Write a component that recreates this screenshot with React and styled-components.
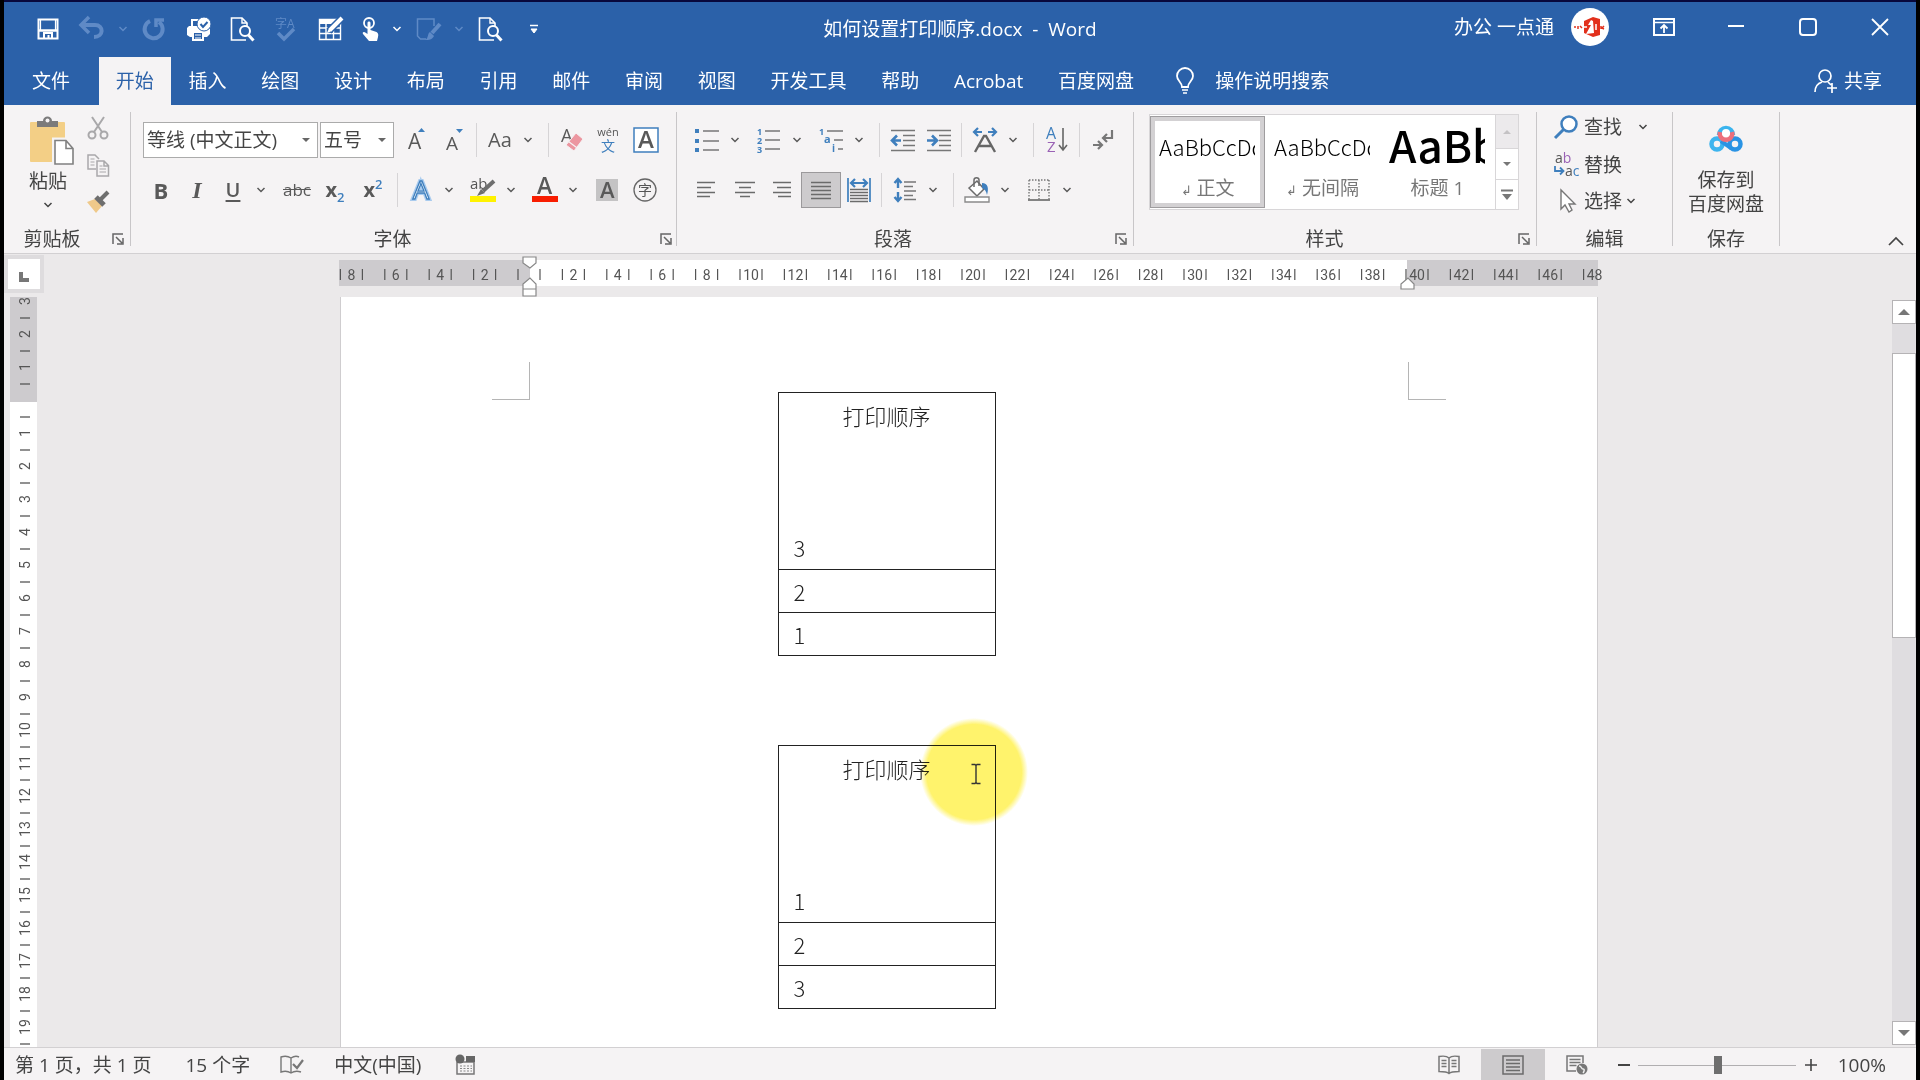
import React from "react"
import styled, { createGlobalStyle } from "styled-components"

const GlobalStyle = createGlobalStyle`
  :root {
    --blue: #2b61a9;
    --ribbon: #f5f3f4;
    --desk: #ebe9ea;
    --line: #d2d0d2;
    --ink: #444;
    --accent: #3f7fbd;
  }
  * {
    box-sizing: border-box;
  }
  body {
    margin: 0;
    background: #000;
    color: var(--ink);
    font-family: "Open Sans", "Noto Sans CJK SC", sans-serif;
    font-size: 19px;
    line-height: 24px;
  }
  button,
  select {
    font: inherit;
    color: inherit;
    background: none;
    border: none;
    padding: 0;
    margin: 0;
  }
  svg {
    overflow: visible;
  }
`

/* ---------- icons ---------- */

const Svg = ({ w = 24, h = 24, children, ...rest }) => (
  <svg
    width={w}
    height={h}
    viewBox={`0 0 ${w} ${h}`}
    fill="none"
    stroke="currentColor"
    strokeWidth="2"
    aria-hidden="true"
    {...rest}
  >
    {children}
  </svg>
)

const Caret = () => (
  <Svg w={10} h={8}>
    <path d="M1.500 2l3.500 3.500L8.500 2" strokeWidth="1.500" />
  </Svg>
)

const SaveIcon = () => (
  <Svg w={22} h={22}>
    <path d="M1.500 1.500h19v19h-19z" />
    <path d="M1.500 12.500h19" strokeWidth="2.500" />
    <path d="M7 20v-5h8v5" />
    <path d="M11.500 17v3" />
    <path d="M3.500 1v11M18.500 1v11" strokeWidth="1.200" />
  </Svg>
)

const UndoIcon = () => (
  <Svg>
    <path d="M3 8h12c9 0 9 12-1 12" strokeWidth="4" />
    <path d="M9 0L1 8l8 8" strokeWidth="3.500" />
  </Svg>
)

const RedoIcon = () => (
  <Svg w={22}>
    <path d="M7 4a9 9 0 1 0 9 1" strokeWidth="4" />
    <path d="M13 10V3h8" strokeWidth="3.500" />
  </Svg>
)

const PrintIcon = () => (
  <Svg w={25}>
    <path d="M6 10V3h8" />
    <path d="M3 9h19l2 3v5l-3 3H4l-3-2v-7z" fill="currentColor" stroke="none" />
    <path d="M7 15h10v8H7z" fill="var(--blue)" />
    <path d="M9 18h6M9 21h6" strokeWidth="1" />
    <circle cx="18" cy="7" r="7" fill="currentColor" stroke="var(--blue)" strokeWidth="1" />
    <path d="M14.500 7l2.500 3 4.500-5" stroke="var(--blue)" />
  </Svg>
)

const PreviewIcon = () => (
  <Svg w={25}>
    <path d="M17 10V6l-5-5H1.500v22H16" strokeWidth="1.600" />
    <path d="M12 1v5h5" strokeWidth="1.400" />
    <circle cx="15" cy="14" r="5" fill="var(--blue)" />
    <path d="M18.500 18l5 5.500" strokeWidth="3" />
  </Svg>
)

const SpellIcon = () => (
  <Svg>
    <text x="1" y="11" fontSize="12" fill="currentColor" stroke="none">字A</text>
    <path d="M4 16l6 6 10-10" strokeWidth="3.500" />
  </Svg>
)

const TablePenIcon = () => (
  <Svg w={25}>
    <path d="M1.500 2.500h21v20h-21zM1.500 11h21M1.500 16.500h21M8 7v16M15.500 7v16" strokeWidth="1.400" />
    <path d="M1 2h17v5H1z" fill="currentColor" stroke="none" />
    <path d="M23 2L11 14" stroke="var(--blue)" strokeWidth="7" />
    <path d="M24 1L12 13" strokeWidth="4" />
    <path d="M11 11l3 3-5 2z" fill="currentColor" stroke="none" />
  </Svg>
)

const TouchIcon = () => (
  <Svg w={18}>
    <circle cx="8" cy="6" r="5" strokeWidth="1.800" />
    <path d="M6.500 6c0-2 3-2 3 0v7l6 2c2 1 2 3 1.500 5l-1 4H8l-6-7c-1-2 1-3 3-1l1.500 1z" fill="currentColor" stroke="none" />
  </Svg>
)

const DocPenIcon = () => (
  <Svg w={25}>
    <path d="M18 9V2H1.500v17l3 3H10" strokeWidth="1.500" />
    <path d="M24 7l-8 9" strokeWidth="4" />
    <path d="M14 15l4 4c-2 4-5 4-9 4 4-2 2-6 5-8z" fill="currentColor" stroke="none" />
  </Svg>
)

const CustomizeIcon = () => (
  <Svg w={8} h={12}>
    <path d="M0 2.500h8" strokeWidth="1.500" />
    <path d="M1 6h6l-3 4z" fill="currentColor" strokeWidth="1" />
  </Svg>
)

const AvatarArt = () => (
  <Svg w={38} h={38}>
    <path d="M13 13l9-4 7 2v16l-7 2-9-4z" fill="#e2301c" stroke="none" />
    <path d="M20 12l-3 5h3l-5 9 8-1-1-12z" fill="#fff" stroke="none" />
    <path d="M4 18v2M7 18v3M9 18l2 2M30 18v3M33 18l-2 2 2 1" stroke="#e2301c" strokeWidth="1.500" />
    <path d="M12 19h4M25 16v6" stroke="#fff" strokeWidth="1.500" />
  </Svg>
)

const RibbonDisplayIcon = () => (
  <Svg w={22} h={18}>
    <path d="M1 1h20v16H1z" />
    <path d="M1 4.500h20" strokeWidth="1.500" />
    <path d="M11 15V7M7.500 10.500L11 7l3.500 3.500" strokeWidth="1.800" />
  </Svg>
)

const MinIcon = () => (
  <Svg w={18} h={18}><path d="M1 8h16" /></Svg>
)
const MaxIcon = () => (
  <Svg w={18} h={18}><rect x="1" y="1" width="16" height="16" rx="3" /></Svg>
)
const CloseIcon = () => (
  <Svg w={18} h={18}><path d="M1 1l16 16M17 1L1 17" strokeWidth="1.800" /></Svg>
)

const BulbIcon = () => (
  <Svg w={20} h={26}>
    <path d="M7 19c0-5-5-6-5-11a8 8 0 0 1 16 0c0 5-5 6-5 11z" strokeWidth="1.800" />
    <path d="M7 22h6M8 25h4" strokeWidth="1.600" />
  </Svg>
)

const ShareIcon = () => (
  <Svg>
    <circle cx="11" cy="7" r="6" strokeWidth="1.700" />
    <path d="M1 23c0-6 4-9 7-10M14 13l3 3M18 14v10M13 19h10" strokeWidth="1.700" />
  </Svg>
)

const PasteIcon = () => (
  <Svg w={52} h={50}>
    <g transform="translate(8 0)">
      <rect x="0" y="6" width="35" height="40" rx="1" fill="#f3cf86" stroke="none" />
      <path d="M7 5h6c0-6 9-6 9 0h6v6H7z" fill="#7b7b7b" stroke="none" />
      <circle cx="17.500" cy="4.500" r="2" fill="#f5f3f4" stroke="none" />
      <path d="M24 23.500h12l7 8V49H24z" fill="#fff" stroke="#f5f3f4" strokeWidth="4" />
      <path d="M25 24.500h11l7 8V48H25zM36 24.500v8h7" fill="#fff" stroke="#808080" strokeWidth="1.600" />
    </g>
  </Svg>
)

const ScissorsIcon = () => (
  <Svg w={22} stroke="#a9a8aa">
    <circle cx="5" cy="19" r="3.500" />
    <circle cx="17" cy="19" r="3.500" />
    <path d="M5 1l10 15M17 1L7 16" />
  </Svg>
)

const CopyIcon = () => (
  <Svg stroke="#a9a8aa">
    <path d="M10 16H2V2h7l4 4" strokeWidth="1.500" />
    <path d="M4.500 6h4M4.500 9h4M4.500 12h4" strokeWidth="1.200" />
    <path d="M11 8h7l4.500 4.500V23H11zM18 8v5h4.500" strokeWidth="1.500" />
    <path d="M13.500 13h3M13.500 16h6.500M13.500 19h6.500" strokeWidth="1.200" />
  </Svg>
)

const BrushIcon = () => (
  <Svg>
    <path d="M1 12l8-3 7 7-6 7z" fill="#efc98a" stroke="none" />
    <path d="M10 7l8 8" stroke="#6e6e6e" strokeWidth="5" />
    <path d="M14 10l8-8" stroke="#6e6e6e" strokeWidth="4" />
  </Svg>
)

const LauncherIcon = () => (
  <Svg w={12} h={12} stroke="#666" strokeWidth="1.500">
    <path d="M1 11V1h10" />
    <path d="M4 4l6 6M11 5v6H5" />
  </Svg>
)

const GlyphA = ({ x, y, size, color = "#595959", weight = 400 }) => (
  <text x={x} y={y} fontSize={size} fontWeight={weight} fill={color} stroke="none">
    A
  </text>
)

const GrowIcon = () => (
  <Svg>
    <GlyphA x={4} y={21} size={21} />
    <path d="M14 4h7l-3.500-4z" fill="var(--accent)" stroke="none" />
  </Svg>
)
const ShrinkIcon = () => (
  <Svg>
    <GlyphA x={4} y={22} size={19} />
    <path d="M14 1h7l-3.500 4z" fill="var(--accent)" stroke="none" />
  </Svg>
)

const EraserIcon = () => (
  <Svg>
    <GlyphA x={1} y={14} size={18} />
    <path d="M16 5l7 6-9 12-8-6z" fill="#ec96a0" stroke="#f5f3f4" strokeWidth="1" />
    <path d="M8.500 13.500l8 6" stroke="#f5f3f4" strokeWidth="1.200" />
  </Svg>
)

const PinyinIcon = () => (
  <Svg w={22} h={26}>
    <text x="11" y="9" fontSize="11" textAnchor="middle" fill="#555" stroke="none">wén</text>
    <text x="11" y="24" fontSize="14" textAnchor="middle" fill="var(--accent)" stroke="none">文</text>
  </Svg>
)

const BoxedAIcon = () => (
  <Svg w={26} h={26}>
    <path d="M1 1h24v24H1z" stroke="var(--accent)" fill="#fff" strokeWidth="1.500" />
    <GlyphA x={5} y={21} size={24} weight={600} />
  </Svg>
)

const TextEffectIcon = () => (
  <Svg w={22}>
    <text x="11" y="21" fontSize="26" textAnchor="middle" fill="#fff" stroke="#a9cbee" strokeWidth="4">A</text>
    <text x="11" y="21" fontSize="26" textAnchor="middle" fill="#fff" stroke="#3f7fbd" strokeWidth="1.300">A</text>
  </Svg>
)

const HighlightIcon = () => (
  <Svg w={26} h={26}>
    <text x="0" y="12" fontSize="15" fill="#555" stroke="none">ab</text>
    <path d="M24 4L13 14" stroke="#6e6e6e" strokeWidth="4" />
    <path d="M11 12l4 4-8 3z" fill="#6e6e6e" stroke="none" />
    <path d="M0 19h26v6H0z" fill="#fff200" stroke="none" />
  </Svg>
)

const FontColorIcon = () => (
  <Svg w={26} h={26}>
    <GlyphA x={5} y={17} size={23} weight={600} />
    <path d="M0 19h26v6H0z" fill="#f81c00" stroke="none" />
  </Svg>
)

const ShadeIcon = () => (
  <Svg w={22} h={22}>
    <path d="M0 0h22v22H0z" fill="#c4c3c4" stroke="none" />
    <GlyphA x={4} y={19} size={22} weight={600} />
  </Svg>
)

const EncloseIcon = () => (
  <Svg>
    <circle cx="12" cy="12" r="11" strokeWidth="1.300" stroke="#666" />
    <text x="12" y="17" fontSize="14" textAnchor="middle" fill="#555" stroke="none">字</text>
  </Svg>
)

const BulletsIcon = () => (
  <Svg>
    <path d="M0 1h4v4H0zM0 11h4v4H0zM0 20h4v4H0z" fill="var(--accent)" stroke="none" />
    <path d="M8 3h16M8 13h16M8 22h16" stroke="#777" strokeWidth="1.500" />
  </Svg>
)

const NumbersIcon = () => (
  <Svg h={26}>
    {["1", "2", "3"].map((n, i) => (
      <text key={n} x="0" y={8 + i * 9} fontSize="9" fontWeight="700" fill="var(--accent)" stroke="none">{n}</text>
    ))}
    <path d="M8 4h15M8 13h15M8 22h15" stroke="#777" strokeWidth="1.500" />
  </Svg>
)

const MultilevelIcon = () => (
  <Svg h={26}>
    <text x="0" y="8" fontSize="9" fontWeight="700" fill="var(--accent)" stroke="none">1</text>
    <text x="5" y="16" fontSize="11" fontWeight="700" fill="var(--accent)" stroke="none">a</text>
    <text x="13" y="25" fontSize="10" fontWeight="700" fill="var(--accent)" stroke="none">i</text>
    <path d="M8 4h16M15 13h9M19 22h5" stroke="#777" strokeWidth="1.500" />
  </Svg>
)

const IndentIcon = ({ out }) => (
  <Svg>
    <path d="M0 2.500h24M12 7.500h12M12 12.500h12M12 17.500h12M0 22.500h24" stroke="#777" strokeWidth="1.500" />
    <path
      d={out ? "M10 12.500H2M6 7.500l-5 5 5 5" : "M0 12.500h8M5 7.500l5 5-5 5"}
      stroke="var(--accent)"
      strokeWidth="2.600"
    />
  </Svg>
)

const AsianLayoutIcon = () => (
  <Svg w={26}>
    <path d="M2 4h8M6 0L2 4l4 4M16 4h8M20 0l4 4-4 4" stroke="var(--accent)" strokeWidth="2.200" />
    <path d="M3 24L12 8h2l9 16M7 18h12" stroke="#666" strokeWidth="2.400" />
  </Svg>
)

const SortIcon = () => (
  <Svg w={22} h={26}>
    <text x="0" y="12" fontSize="16" fill="var(--accent)" stroke="none">A</text>
    <text x="1" y="25" fontSize="15" fill="#9a62b5" stroke="none">Z</text>
    <path d="M17 1v22M13 18l4 5 4-5" stroke="#666" strokeWidth="1.600" />
  </Svg>
)

const MarksIcon = () => (
  <Svg w={22}>
    <path d="M20 2v8h-9M15 6l-4 4 4 4" stroke="#777" strokeWidth="2.200" />
    <path d="M1 17h9M6 13l4 4-4 4" stroke="#777" strokeWidth="2.200" />
  </Svg>
)

const alignPaths = {
  left: "M0 1.500h18M0 6.500h14M0 11.500h18M0 15.500h13",
  center: "M0 1.500h20M4 6.500h12M0 11.500h20M5 15.500h10",
  right: "M0 1.500h18M4 6.500h14M0 11.500h18M5 15.500h13",
  justify: "M0 1.500h20M0 5.500h20M0 9.500h20M0 13.500h20M0 17.500h20",
}

const AlignIcon = ({ kind }) => (
  <Svg w={20} h={19}>
    <path d={alignPaths[kind]} stroke="#6b6b6b" strokeWidth="1.500" />
  </Svg>
)

const DistributeIcon = () => (
  <Svg>
    <path d="M1 0v24M23 0v24" stroke="var(--accent)" strokeWidth="1.700" />
    <path d="M4 5h16M8 1L4 5l4 4M16 1l4 4-4 4" stroke="var(--accent)" strokeWidth="2.200" />
    <path d="M3 11.500h18M3 14.500h18M3 17.500h18M3 20.500h18M3 23.500h18" stroke="#6b6b6b" strokeWidth="1.500" />
  </Svg>
)

const SpacingIcon = () => (
  <Svg w={22} h={26}>
    <path d="M4 3v8M0.500 6L4 2l3.500 4M4 15v8M0.500 20L4 24l3.500-4" stroke="var(--accent)" strokeWidth="2.400" />
    <path d="M10 5h12M10 9.500h9M10 14h12M10 18.500h9M10 22.500h12" stroke="#777" strokeWidth="1.500" />
  </Svg>
)

const FillIcon = () => (
  <Svg w={26} h={26}>
    <path d="M5 11l8-7 7 8-7 7z" fill="#fff" stroke="#6b6b6b" strokeWidth="1.500" />
    <path d="M10 10V3c0-3 5-3 5 0v6" stroke="#6b6b6b" strokeWidth="1.500" />
    <path d="M18 6c6 0 7 5 5 12-1-4-2-6-5-7z" fill="var(--accent)" stroke="none" />
    <path d="M1 20h24v5H1z" fill="#fff" stroke="#8a8a8a" strokeWidth="1.400" />
  </Svg>
)

const BordersIcon = () => (
  <Svg w={22} h={22}>
    <path d="M1 1h20M1 11h20M1 1v20M11 1v20M21 1v20" stroke="#777" strokeWidth="1.400" strokeDasharray="1.500 1.500" />
    <path d="M0 21h22" stroke="#777" strokeWidth="1.800" />
  </Svg>
)

const FindIcon = () => (
  <Svg>
    <circle cx="15" cy="9" r="7.500" fill="#fff" stroke="var(--accent)" strokeWidth="2.500" />
    <path d="M9.500 14.500L1 23" stroke="var(--accent)" strokeWidth="3" />
  </Svg>
)

const ReplaceIcon = () => (
  <Svg w={26} h={26}>
    <text x="1" y="11" fontSize="14" fill="#555" stroke="none">a<tspan fill="#9a62b5">b</tspan></text>
    <text x="11" y="24" fontSize="14" fill="#555" stroke="none">a<tspan fill="#3f7fbd">c</tspan></text>
    <path d="M1 14v5h8M6 15.500l3.500 3.500L6 22.500" stroke="var(--accent)" strokeWidth="1.800" />
  </Svg>
)

const SelectIcon = () => (
  <Svg w={26} h={24}>
    <path d="M7 1v19l4-4 4 7 3-2-3-6h6z" fill="#fff" stroke="#777" strokeWidth="1.400" />
  </Svg>
)

const CloudIcon = () => (
  <Svg w={34} h={28}>
    <circle cx="8" cy="20" r="5.500" stroke="#3db4ee" strokeWidth="4.500" />
    <circle cx="26" cy="20" r="5.500" stroke="#2a93e4" strokeWidth="4.500" />
    <path d="M12 17l10 7" stroke="#2a93e4" strokeWidth="4" />
    <path d="M10 11a7 7 0 1 1 14 0" stroke="#3bb4ee" strokeWidth="4.500" />
    <path d="M11 8a6.200 6.200 0 1 0 12 0" stroke="#ec6f7c" strokeWidth="4.500" />
    <circle cx="17" cy="9" r="4" fill="#fff" stroke="none" />
  </Svg>
)

const ProofIcon = () => (
  <Svg w={24} h={20} stroke="#777" strokeWidth="1.400">
    <path d="M11 3c-3-2-7-2-10-1v15c3-1 7-1 10 1 3-2 7-2 10-1M11 3v15M11 3c3-2 6-2 8-1" />
    <path d="M13 9l4 4 6-8" strokeWidth="2.200" />
  </Svg>
)

const MacroIcon = () => (
  <Svg w={20} h={20}>
    <path d="M2 7h17v12H2z" stroke="#777" strokeWidth="1.500" />
    <circle cx="5" cy="4" r="4.500" fill="#666" stroke="none" />
    <path d="M11 1h9v6h-9z" fill="#666" stroke="none" />
    <path d="M5 11h12M5 13.500h12M5 16h12" stroke="#888" strokeWidth="1.200" strokeDasharray="2 1.500" />
  </Svg>
)

const ReadIcon = () => (
  <Svg w={22} h={20} stroke="#777" strokeWidth="1.500">
    <path d="M11 3c-2-2-7-2-10-1.500v15c4 0 8 0 10 2 2-2 6-2 10-2v-15C18 1 13 1 11 3zM11 3v16" />
    <path d="M3.500 5.500h5M3.500 8.500h5M3.500 11.500h5M13.500 5.500h5M13.500 8.500h5M13.500 11.500h5" />
  </Svg>
)

const PrintViewIcon = () => (
  <Svg w={22} h={20} stroke="#6b6b6b" strokeWidth="1.500">
    <path d="M1 1h20v18H1zM4 5h14M4 8.500h14M4 12h14M4 15.500h14" />
  </Svg>
)

const WebViewIcon = () => (
  <Svg w={22} h={20} stroke="#777" strokeWidth="1.500">
    <path d="M17 8V1H1v15h9M3.500 4.500h11M3.500 7.500h11M3.500 10.500h7" />
    <circle cx="16" cy="14" r="5.500" fill="#777" stroke="none" />
    <path d="M13 11c3 0 2 3 4 3s1 3 0 4" stroke="#eee" />
  </Svg>
)

/* ---------- title bar and tabs ---------- */

const Window = styled.div`
  display: flex;
  flex-direction: column;
  height: 100vh;
  overflow: hidden;
  border: solid #000;
  border-width: 0 4px;
`

const TitleBar = styled.header`
  display: grid;
  grid-template-columns: 1fr auto 1fr;
  align-items: center;
  height: 57px;
  padding-bottom: 2px;
  border-top: 2px solid #08083c;
  background: var(--blue);
  color: #fff;
  h1 {
    margin: 0;
    font-size: 19px;
    font-weight: 400;
    white-space: pre;
  }
`

const QuickAccess = styled.div`
  display: flex;
  padding-left: 22px;
`

const quickWidths = { normal: "44px", slim: "36px", caret: "18px" }

const QuickButton = styled.button`
  display: grid;
  place-items: center;
  width: ${({ $size = "normal" }) => quickWidths[$size]};
  height: 36px;
  &:disabled {
    color: #5f8ac6;
  }
`

const Account = styled.div`
  display: flex;
  justify-content: flex-end;
  align-items: center;
  height: 50px;
  align-self: start;
`

const UserButton = styled.button`
  display: flex;
  align-items: center;
  gap: 17px;
  margin-right: 19px;
`

const Avatar = styled.span`
  display: grid;
  width: 38px;
  height: 38px;
  border-radius: 50%;
  background: #fff;
`

const WindowButton = styled.button`
  display: grid;
  place-items: center;
  width: 72px;
  height: 50px;
`

const TabBar = styled.nav`
  display: flex;
  height: 48px;
  background: var(--blue);
  color: #fff;
`

const TabList = styled.div`
  display: flex;
  justify-content: space-between;
  width: 60%;
`

const Tab = styled.button`
  padding: 0 17px;
  white-space: nowrap;
  background: ${({ $active }) => ($active ? "var(--ribbon)" : "none")};
  color: ${({ $active }) => ($active ? "var(--blue)" : "#fff")};
  &:first-child {
    padding: 0 28px;
  }
`

const SearchButton = styled.button`
  display: flex;
  align-items: center;
  gap: 20px;
  padding-left: 24px;
`

const ShareButton = styled.button`
  display: flex;
  align-items: center;
  gap: 6px;
  margin-left: auto;
  padding-right: 34px;
`

/* ---------- ribbon ---------- */

const Ribbon = styled.section`
  display: flex;
  height: 149px;
  padding: 7px 0;
  background: var(--ribbon);
  border-bottom: 1px solid var(--line);
`

const Group = styled.section`
  display: flex;
  flex-direction: column;
  justify-content: space-between;
  padding: ${({ $pad }) => $pad || "0 12px"};
  border-right: 1px solid #c8c6c8;
`

const GroupFooter = styled.footer`
  display: flex;
  align-items: center;
  height: 14px;
  margin: ${({ $launcher }) => ($launcher ? "0 -12px" : "0")};
  span {
    flex: 1;
    text-align: center;
    white-space: nowrap;
  }
`

const Launcher = styled.button`
  display: grid;
  place-items: center;
  width: 24px;
  height: 14px;
`

const Rows = styled.div`
  display: grid;
  gap: 14px;
  padding-top: 10px;
`

const Row = styled.div`
  display: flex;
  height: 36px;
`

const Tool = styled.button`
  display: grid;
  place-items: center;
  width: ${({ $wide }) => ($wide ? "40px" : "36px")};
  height: 36px;
  color: #595959;
  border: 1px solid ${({ $on }) => ($on ? "#9b999b" : "transparent")};
  background: ${({ $on }) => ($on ? "#cdcbcd" : "none")};
  font-size: 22px;
`

const SplitTool = styled.button`
  display: grid;
  grid-template-columns: 36px 20px;
  place-items: center;
  width: 62px;
  height: 36px;
  color: #595959;
  font-size: 20px;
`

const Rule = styled.span`
  width: 10px;
  border-right: 1px solid #d6d4d6;
  margin: 1px 5px 1px -5px;
`

const Sub = styled.span`
  font-size: 20px;
  font-weight: 700;
  line-height: 20px;
  sub,
  sup {
    font-size: 13px;
    font-weight: 600;
    line-height: 0;
    color: var(--accent);
  }
`

const Strike = styled.s`
  font-size: 17px;
`

const GlyphItalic = styled.i`
  font-family: "Liberation Serif", serif;
  font-size: 24px;
  font-weight: 700;
`

const GlyphUnder = styled.u`
  font-weight: 600;
  text-underline-offset: 3px;
`

const Picker = styled.label`
  position: relative;
  display: flex;
  align-items: center;
  width: ${({ $wide }) => ($wide ? "175px" : "74px")};
  margin-right: 2px;
  background: #fff;
  border: 1px solid #ababab;
  select {
    width: 100%;
    height: 34px;
    padding-left: 3px;
    appearance: none;
  }
  svg {
    position: absolute;
    right: 7px;
    color: #666;
    pointer-events: none;
  }
`

const Clipboard = styled.div`
  display: grid;
  grid-template-columns: 76px 32px;
  padding-top: 4px;
`

const PasteButton = styled.button`
  display: flex;
  flex-direction: column;
  align-items: center;
  gap: 3px;
  svg:last-child {
    margin-top: 5px;
  }
`

const ClipTools = styled.div`
  display: grid;
  align-content: start;
  gap: 13px;
  button {
    height: 24px;
    width: 24px;
  }
`

const Gallery = styled.div`
  display: flex;
  height: 96px;
  margin: 2px 5px 0 0;
  background: #fff;
  border: 1px solid #d8d6d8;
`

const StyleCard = styled.button`
  display: flex;
  flex-direction: column;
  width: 115px;
  padding: ${({ $on }) => ($on ? "3px 4px" : "8px 9px")};
  margin: 1px 0;
  border: ${({ $on }) => ($on ? "5px solid #d3d1d3" : "none")};
  outline: ${({ $on }) => ($on ? "1px solid #9f9d9f" : "none")};
  outline-offset: -1px;
`

const Sample = styled.span`
  width: 96px;
  height: 52px;
  overflow: hidden;
  text-align: left;
  white-space: nowrap;
  color: #000;
  font-family: "Noto Sans CJK SC", sans-serif;
  font-size: ${({ $big }) => ($big ? "44px" : "22px")};
  font-weight: ${({ $big }) => ($big ? 500 : 300)};
  line-height: ${({ $big }) => ($big ? "40px" : "44px")};
`

const StyleName = styled.span`
  align-self: center;
  height: 24px;
  color: #777;
  white-space: nowrap;
  small {
    font-size: 13px;
  }
`

const GalleryScroll = styled.div`
  display: grid;
  grid-template-rows: 33px 31px 30px;
  width: 23px;
  border-left: 1px solid #d8d6d8;
  button {
    display: grid;
    place-items: center;
    color: #777;
  }
  button + button {
    border-top: 1px solid #d8d6d8;
  }
  button:disabled {
    background: #eceaec;
    color: #c4c2c4;
  }
`

const EditList = styled.div`
  display: grid;
  gap: 13px;
  width: 101px;
  padding-top: 3px;
`

const EditButton = styled.button`
  display: grid;
  grid-template-columns: 26px 38px auto;
  justify-content: start;
  align-items: center;
  gap: 4px;
  height: 24px;
  white-space: nowrap;
  svg:last-child {
    margin-left: ${({ $far }) => ($far ? "12px" : "0")};
  }
`

const CloudButton = styled.button`
  display: flex;
  flex-direction: column;
  align-items: center;
  padding-top: 12px;
  white-space: nowrap;
  svg {
    margin-bottom: 16px;
  }
`

const CollapseButton = styled.button`
  align-self: flex-end;
  margin: 0 11px 0 auto;
  height: 18px;
`

/* ---------- document ---------- */

const Workspace = styled.main`
  flex: 1;
  min-height: 0;
  display: grid;
  grid-template-columns: 41px 1fr 24px;
  grid-template-rows: 43px 1fr;
  background: var(--desk);
`

const TabStop = styled.button`
  width: 32px;
  height: 30px;
  margin: 5px 0 0 4px;
  background: #fff;
  box-shadow: 0 0 0 4px #dedcde;
`

const HRuler = styled.div`
  display: flex;
  justify-content: center;
  padding-top: 3px;
  svg {
    flex-shrink: 0;
  }
`

const VRuler = styled.div`
  grid-column: 1;
  grid-row: 2;
  margin-left: 6px;
  width: 27px;
  overflow: hidden;
  background: #fff;
`

const Desk = styled.div`
  grid-column: 2;
  grid-row: 2;
  display: flex;
  justify-content: center;
  min-height: 0;
  overflow: hidden;
`

const Page = styled.article`
  display: grid;
  grid-template-columns: 38px 1fr 38px;
  align-items: start;
  width: 1258px;
  flex-shrink: 0;
  padding: 65px 151px 0;
  background: #fff;
  border: solid #cfcdcf;
  border-width: 0 1px;
`

const Corner = styled.span`
  height: 38px;
  border-bottom: 1px solid #b5b5b5;
  border-left: ${({ $right }) => ($right ? "1px solid #b5b5b5" : "none")};
  border-right: ${({ $right }) => ($right ? "none" : "1px solid #b5b5b5")};
`

const Body = styled.div`
  display: flex;
  flex-direction: column;
  align-items: flex-start;
  gap: 89px;
  padding: 30px 0 0 248px;
`

const OrderTable = styled.table`
  width: 218px;
  border-collapse: collapse;
  color: #222;
  font-family: "Noto Sans CJK SC", sans-serif;
  font-size: 22px;
  font-weight: 300;
  td {
    padding: 0 0 0 15px;
    line-height: 42px;
    border: 1px solid #222;
  }
  p {
    margin: 0;
    line-height: 44px;
    min-height: 44px;
  }
  p:first-child {
    padding-right: 15px;
    text-align: center;
  }
`

const TableSlot = styled.div`
  position: relative;
`

const Spotlight = styled.span`
  position: absolute;
  left: 142px;
  top: -27px;
  width: 108px;
  height: 108px;
  border-radius: 50%;
  background: radial-gradient(closest-side, #fff36c 88%, rgba(255, 243, 108, 0) 100%);
  mix-blend-mode: multiply;
`

const IBeam = styled.svg`
  position: absolute;
  left: 193px;
  top: 18px;
`

const ScrollBar = styled.div`
  grid-column: 3;
  grid-row: 2;
  display: flex;
  flex-direction: column;
  margin: 3px 0 2px;
  background: #dfdde0;
  button {
    display: grid;
    place-items: center;
    height: 24px;
    background: #fff;
    border: 1px solid #b5b3b5;
    color: #777;
  }
`

const Thumb = styled.div`
  height: 285px;
  margin: 29px 0 auto;
  background: #fff;
  border: 1px solid #b5b3b5;
`

/* ---------- status bar ---------- */

const StatusBar = styled.footer`
  display: flex;
  align-items: center;
  height: 33px;
  padding: 2px 30px 0 11px;
  background: var(--ribbon);
  border-top: 1px solid var(--line);
  white-space: nowrap;
`

const StatusButton = styled.button`
  display: flex;
  align-items: center;
  height: 28px;
  margin-right: ${({ $tight }) => ($tight ? "30px" : "34px")};
`

const Spacer = styled.span`
  flex: 1;
`

const ViewButton = styled.button`
  display: grid;
  place-items: center;
  width: 64px;
  height: 32px;
  background: ${({ $on }) => ($on ? "#cdcbcd" : "none")};
`

const Zoom = styled.div`
  display: flex;
  align-items: center;
  margin-left: 7px;
  input {
    appearance: none;
    width: 158px;
    height: 20px;
    margin: 0 7px 0 6px;
    background: linear-gradient(#b0aeb0, #b0aeb0) center / 100% 1px no-repeat;
  }
  input::-webkit-slider-thumb {
    appearance: none;
    width: 8px;
    height: 18px;
    background: #6e6e6e;
  }
  button {
    display: grid;
    place-items: center;
    width: 16px;
    height: 24px;
  }
  button:last-child {
    width: auto;
    margin-left: 19px;
  }
`

const Triangle = ({ up, size = 12 }) => (
  <Svg w={size} h={size / 2} stroke="none">
    <path
      d={up ? `M0 ${size / 2}h${size}L${size / 2} 0z` : `M0 0h${size}L${size / 2} ${size / 2}z`}
      fill="currentColor"
    />
  </Svg>
)

const Split = ({ label, children }) => (
  <SplitTool aria-label={label}>
    {children}
    <Caret />
  </SplitTool>
)

const Footer = ({ children, launcher }) => (
  <GroupFooter $launcher={launcher}>
    <span>{children}</span>
    {launcher && (
      <Launcher aria-label={`${children}设置`}>
        <LauncherIcon />
      </Launcher>
    )}
  </GroupFooter>
)

const tabs = [
  "文件", "开始", "插入", "绘图", "设计", "布局", "引用",
  "邮件", "审阅", "视图", "开发工具", "帮助", "Acrobat", "百度网盘",
]

const Header = () => (
  <>
    <TitleBar>
      <QuickAccess>
        <QuickButton aria-label="保存"><SaveIcon /></QuickButton>
        <QuickButton aria-label="撤消" disabled><UndoIcon /></QuickButton>
        <QuickButton aria-label="撤消列表" disabled $size="caret"><Caret /></QuickButton>
        <QuickButton aria-label="重复" disabled><RedoIcon /></QuickButton>
        <QuickButton aria-label="快速打印"><PrintIcon /></QuickButton>
        <QuickButton aria-label="打印预览"><PreviewIcon /></QuickButton>
        <QuickButton aria-label="拼写检查" disabled><SpellIcon /></QuickButton>
        <QuickButton aria-label="绘制表格"><TablePenIcon /></QuickButton>
        <QuickButton aria-label="触摸模式" $size="slim"><TouchIcon /></QuickButton>
        <QuickButton aria-label="触摸模式列表" $size="caret"><Caret /></QuickButton>
        <QuickButton aria-label="格式" disabled><DocPenIcon /></QuickButton>
        <QuickButton aria-label="格式列表" disabled $size="caret"><Caret /></QuickButton>
        <QuickButton aria-label="全屏预览"><PreviewIcon /></QuickButton>
        <QuickButton aria-label="自定义"><CustomizeIcon /></QuickButton>
      </QuickAccess>
      <h1>如何设置打印顺序.docx  -  Word</h1>
      <Account>
        <UserButton>
          办公 一点通
          <Avatar><AvatarArt /></Avatar>
        </UserButton>
        <WindowButton aria-label="功能区显示选项"><RibbonDisplayIcon /></WindowButton>
        <WindowButton aria-label="最小化"><MinIcon /></WindowButton>
        <WindowButton aria-label="最大化"><MaxIcon /></WindowButton>
        <WindowButton aria-label="关闭"><CloseIcon /></WindowButton>
      </Account>
    </TitleBar>
    <TabBar>
      <TabList>
        {tabs.map(name => (
          <Tab key={name} $active={name === "开始"}>{name}</Tab>
        ))}
      </TabList>
      <SearchButton><BulbIcon />操作说明搜索</SearchButton>
      <ShareButton><ShareIcon />共享</ShareButton>
    </TabBar>
  </>
)

const FontGroup = () => (
  <Group $pad="0 10px 0 12px">
    <Rows>
      <Row>
        <Picker $wide>
          <select aria-label="字体"><option>等线 (中文正文)</option></select>
          <Triangle size={8} />
        </Picker>
        <Picker>
          <select aria-label="字号"><option>五号</option></select>
          <Triangle size={8} />
        </Picker>
        <Tool $wide aria-label="增大字号"><GrowIcon /></Tool>
        <Tool aria-label="减小字号"><ShrinkIcon /></Tool>
        <Rule />
        <Split label="更改大小写">Aa</Split>
        <Rule />
        <Tool aria-label="清除格式"><EraserIcon /></Tool>
        <Tool aria-label="拼音指南"><PinyinIcon /></Tool>
        <Tool $wide aria-label="字符边框"><BoxedAIcon /></Tool>
      </Row>
      <Row>
        <Tool><b>B</b></Tool>
        <Tool><GlyphItalic>I</GlyphItalic></Tool>
        <Split label="下划线"><GlyphUnder>U</GlyphUnder></Split>
        <Tool $wide><Strike>abc</Strike></Tool>
        <Tool><Sub>x<sub>2</sub></Sub></Tool>
        <Tool $wide><Sub>x<sup>2</sup></Sub></Tool>
        <Rule />
        <Split label="文本效果"><TextEffectIcon /></Split>
        <Split label="突出显示"><HighlightIcon /></Split>
        <Split label="字体颜色"><FontColorIcon /></Split>
        <Tool aria-label="字符底纹"><ShadeIcon /></Tool>
        <Tool $wide aria-label="带圈字符"><EncloseIcon /></Tool>
      </Row>
    </Rows>
    <Footer launcher>字体</Footer>
  </Group>
)

const ParagraphGroup = () => (
  <Group>
    <Rows>
      <Row>
        <Split label="项目符号"><BulletsIcon /></Split>
        <Split label="编号"><NumbersIcon /></Split>
        <Split label="多级列表"><MultilevelIcon /></Split>
        <Rule />
        <Tool aria-label="减少缩进量"><IndentIcon out /></Tool>
        <Tool aria-label="增加缩进量"><IndentIcon /></Tool>
        <Rule />
        <Split label="中文版式"><AsianLayoutIcon /></Split>
        <Rule />
        <Tool aria-label="排序"><SortIcon /></Tool>
        <Rule />
        <Tool aria-label="显示编辑标记"><MarksIcon /></Tool>
      </Row>
      <Row>
        <Tool aria-label="左对齐"><AlignIcon kind="left" /></Tool>
        <Tool $wide aria-label="居中"><AlignIcon kind="center" /></Tool>
        <Tool aria-label="右对齐"><AlignIcon kind="right" /></Tool>
        <Tool $wide $on aria-label="两端对齐"><AlignIcon kind="justify" /></Tool>
        <Tool aria-label="分散对齐"><DistributeIcon /></Tool>
        <Rule />
        <Split label="行距"><SpacingIcon /></Split>
        <Rule />
        <Split label="底纹"><FillIcon /></Split>
        <Split label="边框"><BordersIcon /></Split>
      </Row>
    </Rows>
    <Footer launcher>段落</Footer>
  </Group>
)

const RibbonBar = () => (
  <Ribbon>
    <Group $pad="0 12px 0 6px">
      <Clipboard>
        <PasteButton>
          <PasteIcon />
          粘贴
          <Caret />
        </PasteButton>
        <ClipTools>
          <button aria-label="剪切"><ScissorsIcon /></button>
          <button aria-label="复制"><CopyIcon /></button>
          <button aria-label="格式刷"><BrushIcon /></button>
        </ClipTools>
      </Clipboard>
      <Footer launcher>剪贴板</Footer>
    </Group>
    <FontGroup />
    <ParagraphGroup />
    <Group $pad="0 12px 0 15px">
      <Gallery>
        <StyleCard $on>
          <Sample>AaBbCcDd</Sample>
          <StyleName><small>↲</small> 正文</StyleName>
        </StyleCard>
        <StyleCard>
          <Sample>AaBbCcDd</Sample>
          <StyleName><small>↲</small> 无间隔</StyleName>
        </StyleCard>
        <StyleCard>
          <Sample $big>AaBb</Sample>
          <StyleName>标题 1</StyleName>
        </StyleCard>
        <GalleryScroll>
          <button aria-label="上一行" disabled><Triangle up size={8} /></button>
          <button aria-label="下一行"><Triangle size={8} /></button>
          <button aria-label="其他">
            <Svg w={12} h={12}>
              <path d="M0 1.500h12" />
              <path d="M1 5h10l-5 6z" fill="currentColor" stroke="none" />
            </Svg>
          </button>
        </GalleryScroll>
      </Gallery>
      <Footer launcher>样式</Footer>
    </Group>
    <Group $pad="0 17px">
      <EditList>
        <EditButton $far><FindIcon />查找<Caret /></EditButton>
        <EditButton><ReplaceIcon />替换</EditButton>
        <EditButton><SelectIcon />选择<Caret /></EditButton>
      </EditList>
      <Footer>编辑</Footer>
    </Group>
    <Group $pad="0 15px">
      <CloudButton>
        <CloudIcon />
        <span>保存到</span>
        <span>百度网盘</span>
      </CloudButton>
      <Footer>保存</Footer>
    </Group>
    <CollapseButton aria-label="折叠功能区">
      <Svg w={18} h={12}><path d="M2 10l7-7 7 7" strokeWidth="1.700" /></Svg>
    </CollapseButton>
  </Ribbon>
)

// One ruler unit is 22.2 wide across and 33 down the side.
const UNIT_X = 22.2
const ZERO_X = 189

const HorizontalRuler = () => {
  const marks = []
  for (let n = -8; n <= 48; n += 2) marks.push(n)
  return (
    <HRuler>
      <svg width="1258" height="38" fill="#555">
        <rect x="-1" y="3" width="1259" height="26" fill="#cdcbce" />
        <rect x="190" y="3" width="877" height="26" fill="#fff" />
        {marks.map(n => {
          const x = ZERO_X + n * UNIT_X
          return (
            <g key={n}>
              <path d={`M${x - 11} 12v11${n < 48 ? `M${x + 11} 12v11` : ""}`} stroke="#555" strokeWidth="1.200" />
              {n !== 0 && (
                <text x={x} y="23" textAnchor="middle" fontFamily="Roboto, sans-serif" fontSize="14">
                  {Math.abs(n)}
                </text>
              )}
            </g>
          )
        })}
        <g fill="#fff" stroke="#888" strokeWidth="1.200">
          <path d="M183 0h13v6l-6 5-7-5zM183 27l7-6 6 6v5h-13zM183 32h13v7h-13z" />
          <path d="M1061 27l7-6 6 6v5h-13z" />
        </g>
      </svg>
    </HRuler>
  )
}

const VerticalRuler = () => {
  const marks = []
  for (let n = -3; n <= 19; n += 1) marks.push(n)
  return (
    <VRuler>
      <svg width="27" height="751" fill="#555">
        <rect width="27" height="105" fill="#cdcbce" />
        {marks.map(n => {
          const y = 103 + n * 33
          return (
            <g key={n}>
              <path d={`M10 ${y + 17}h10`} stroke="#555" strokeWidth="1.300" />
              {n !== 0 && (
                <text
                  transform={`translate(20 ${y}) rotate(-90)`}
                  textAnchor="middle"
                  fontFamily="Roboto, sans-serif"
                  fontSize="14"
                >
                  {Math.abs(n)}
                </text>
              )}
            </g>
          )
        })}
      </svg>
    </VRuler>
  )
}

const PrintOrder = ({ values }) => (
  <OrderTable>
    <tbody>
      <tr>
        <td>
          <p>打印顺序</p>
          <p />
          <p />
          <p>{values[0]}</p>
        </td>
      </tr>
      {values.slice(1).map(v => (
        <tr key={v}>
          <td>{v}</td>
        </tr>
      ))}
    </tbody>
  </OrderTable>
)

const Editor = () => (
  <Workspace>
    <TabStop aria-label="制表符">
      <Svg w={32} h={30}><path d="M13 13v8h8" stroke="#777" strokeWidth="4" /></Svg>
    </TabStop>
    <HorizontalRuler />
    <VerticalRuler />
    <Desk>
      <Page>
        <Corner />
        <Body>
          <PrintOrder values={[3, 2, 1]} />
          <TableSlot>
            <PrintOrder values={[1, 2, 3]} />
            <Spotlight />
            <IBeam width="10" height="22" stroke="#333" fill="none">
              <path d="M0.500 1.500h3.500l1 1 1-1h3.500M5 2v18M0.500 20.500h3.500l1-1 1 1h3.500" strokeWidth="1.400" />
            </IBeam>
          </TableSlot>
        </Body>
        <Corner $right />
      </Page>
    </Desk>
    <ScrollBar>
      <button aria-label="向上滚动"><Triangle up size={12} /></button>
      <Thumb />
      <button aria-label="向下滚动"><Triangle size={12} /></button>
    </ScrollBar>
  </Workspace>
)

const Status = () => (
  <StatusBar>
    <StatusButton>第 1 页，共 1 页</StatusButton>
    <StatusButton $tight>15 个字</StatusButton>
    <StatusButton $tight aria-label="校对"><ProofIcon /></StatusButton>
    <StatusButton>中文(中国)</StatusButton>
    <StatusButton aria-label="宏录制"><MacroIcon /></StatusButton>
    <Spacer />
    <ViewButton aria-label="阅读视图"><ReadIcon /></ViewButton>
    <ViewButton $on aria-label="页面视图"><PrintViewIcon /></ViewButton>
    <ViewButton aria-label="Web 版式视图"><WebViewIcon /></ViewButton>
    <Zoom>
      <button aria-label="缩小"><Svg w={12} h={12}><path d="M0 6h12" /></Svg></button>
      <input type="range" min="0" max="100" defaultValue="51" aria-label="显示比例" />
      <button aria-label="放大"><Svg w={12} h={12}><path d="M0 6h12M6 0v12" strokeWidth="1.600" /></Svg></button>
      <button>100%</button>
    </Zoom>
  </StatusBar>
)

const App = () => (
  <Window>
    <GlobalStyle />
    <Header />
    <RibbonBar />
    <Editor />
    <Status />
  </Window>
)

export default App
